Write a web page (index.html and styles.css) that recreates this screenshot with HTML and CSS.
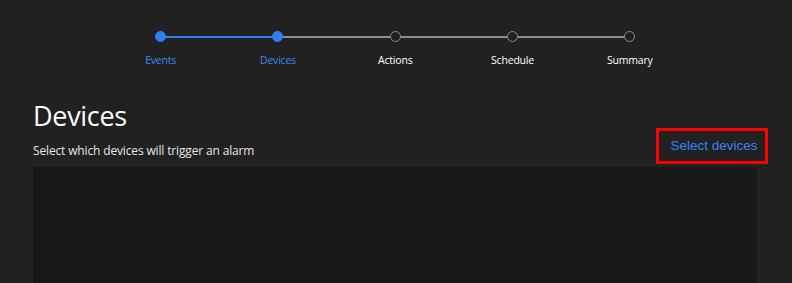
FILE: index.html
```html
<!DOCTYPE html>
<html lang="en">
<head>
    <meta charset="UTF-8">
    <meta name="viewport" content="width=device-width, initial-scale=1.0">
    <title>Devices</title>
    <link rel="stylesheet" href="styles.css">
</head>
<body>
    <!-- Wizard steps -->
    <nav class="stepper">
        <div class="step done"><span class="dot"></span><span class="step-label">Events</span></div>
        <div class="step current"><span class="dot"></span><span class="step-label">Devices</span></div>
        <div class="step"><span class="dot"></span><span class="step-label">Actions</span></div>
        <div class="step"><span class="dot"></span><span class="step-label">Schedule</span></div>
        <div class="step last"><span class="dot"></span><span class="step-label">Summary</span></div>
    </nav>

    <!-- Page header -->
    <header class="page-header">
        <div class="page-title">
            <h1>Devices</h1>
            <p>Select which devices will trigger an alarm</p>
        </div>
        <button class="select-btn">Select devices</button>
    </header>

    <!-- Device list -->
    <section class="device-panel"></section>
</body>
</html>
```

FILE: styles.css
```css
* {
    margin: 0;
    padding: 0;
    box-sizing: border-box;
}

html, body {
    height: 100%;
}

body {
    font-family: 'Open Sans', 'Noto Sans', sans-serif;
    background: #212121;
    color: #fff;
    padding: 0 35px 0 33px;
    display: flex;
    flex-direction: column;
    overflow: hidden;
}

/* Stepper */
.stepper {
    display: flex;
    padding-top: 31px;
    margin-left: 69px;
}

.step {
    position: relative;
    width: 117.3px;
    display: flex;
    flex-direction: column;
    align-items: center;
}

.step::after {
    content: '';
    position: absolute;
    top: 4.5px;
    left: 58.5px;
    width: 117.3px;
    height: 2px;
    background: #8c8c8c;
}

.step.done::after {
    background: #2f80f5;
}

.step.last::after {
    display: none;
}

.dot {
    position: relative;
    z-index: 1;
    width: 11px;
    height: 11px;
    border-radius: 50%;
    border: 1.5px solid #8c8c8c;
    background: #212121;
}

.step.done .dot,
.step.current .dot {
    border-color: #2f80f5;
    background: #2f80f5;
}

.step-label {
    margin-top: 11px;
    font-size: 10.5px;
    line-height: 14px;
    color: #fff;
    letter-spacing: -0.2px;
}

.step.done .step-label,
.step.current .step-label {
    color: #3a86f7;
}

/* Header */
.page-header {
    display: flex;
    justify-content: space-between;
    align-items: flex-end;
    margin-top: 31px;
}

.page-title h1 {
    font-size: 27px;
    font-weight: 400;
    line-height: 36px;
    letter-spacing: -0.3px;
}

.page-title p {
    margin-top: 9px;
    font-size: 12px;
    line-height: 16px;
    color: #e6e6e6;
    letter-spacing: -0.15px;
}

.select-btn {
    width: 112px;
    height: 36px;
    margin-right: -11px;
    margin-bottom: -5px;
    padding-left: 4px;
    border: 3px solid #ff0000;
    background: transparent;
    color: #3a82f7;
    font-family: 'Liberation Sans', Arial, sans-serif;
    font-size: 13.5px;
    line-height: 16px;
    text-align: center;
    cursor: pointer;
}

/* Panel */
.device-panel {
    flex: 1;
    margin-top: 8px;
    background: #181818;
}
```
